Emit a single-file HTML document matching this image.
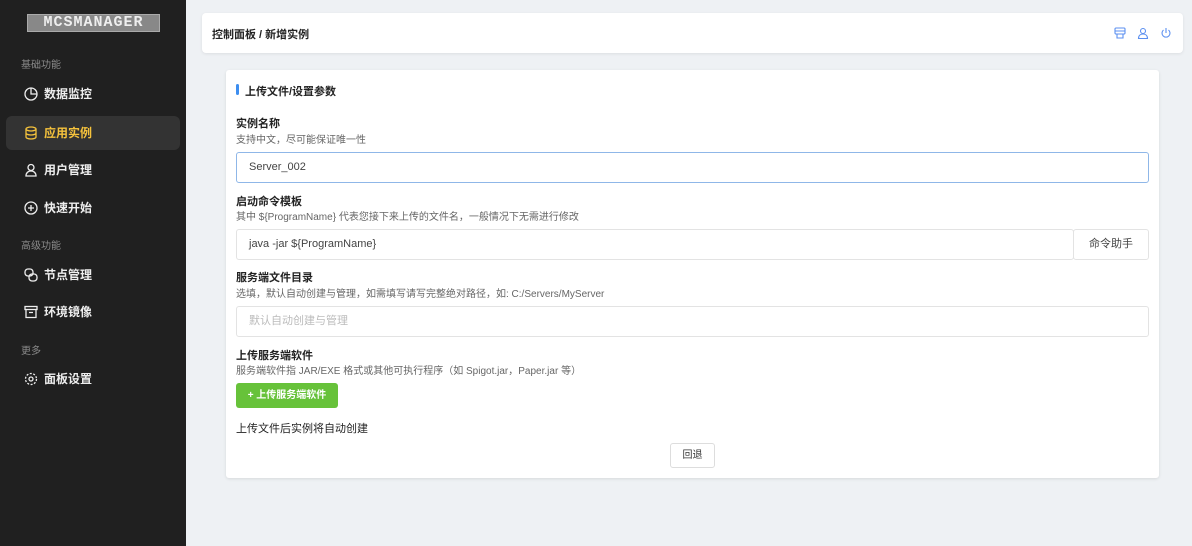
<!DOCTYPE html>
<html><head><meta charset="utf-8"><style>
*{box-sizing:border-box;margin:0;padding:0}
body{width:1192px;height:546px;overflow:hidden;background:#eef1f4;font-family:"Liberation Sans","Noto Sans CJK SC",sans-serif;position:relative}
.side{position:absolute;left:0;top:0;width:186px;height:546px;background:#202020;color:#eee}
.logo{position:absolute;left:27px;top:14px;width:133px;height:18px;background:#888;border:1px solid #aaa;color:#eee;font:bold 15px "Liberation Mono",monospace;letter-spacing:1px;text-align:center;line-height:16px}
.grp{position:absolute;left:21px;font-size:10px;color:#8a8a8a}
.it{position:absolute;left:6px;width:174px;height:34px;font-size:12px;font-weight:bold;line-height:34px;padding-left:38px}
.it svg{position:absolute;left:18px;top:10px}
.act{background:#333;border-radius:6px;color:#f5c23c}
.top{position:absolute;left:202px;top:13px;width:981px;height:40px;background:#fff;border-radius:4px;box-shadow:0 1px 3px rgba(0,0,0,.08)}
.top b{position:absolute;left:10px;top:13px;font-size:11px;color:#222}
.card{position:absolute;left:226px;top:70px;width:933px;height:408px;background:#fff;border-radius:3px;box-shadow:0 1px 3px rgba(0,0,0,.1)}
.t{position:absolute;left:10px;font-size:11px;font-weight:bold;color:#222}
.s{position:absolute;left:10px;font-size:10px;color:#666}
.in{position:absolute;left:10px;height:31px;border:1px solid #e3e3e3;border-radius:3px;font-size:11px;color:#444;padding-left:12px;line-height:29px}
</style></head><body>
<div class="side">
<div class="logo">MCSMANAGER</div>
<div class="grp" style="top:56px">基础功能</div>
<div class="it" style="top:77px"><svg width="14" height="14" viewBox="0 0 14 14" fill="none" stroke="#eee" stroke-width="1.3"><circle cx="7" cy="7" r="6"/><path d="M7 1v6h6"/></svg>数据监控</div>
<div class="it act" style="top:116px"><svg width="14" height="14" viewBox="0 0 14 14" fill="none" stroke="#f5c23c" stroke-width="1.3"><ellipse cx="7" cy="3" rx="5" ry="2"/><path d="M2 3v8c0 1 2 2 5 2s5-1 5-2V3M2 7c0 1 2 2 5 2s5-1 5-2"/></svg>应用实例</div>
<div class="it" style="top:153px"><svg width="14" height="14" viewBox="0 0 14 14" fill="none" stroke="#eee" stroke-width="1.3"><circle cx="7" cy="4.5" r="3"/><path d="M2 13c0-3 2-5 5-5s5 2 5 5z"/></svg>用户管理</div>
<div class="it" style="top:191px"><svg width="14" height="14" viewBox="0 0 14 14" fill="none" stroke="#eee" stroke-width="1.3"><circle cx="7" cy="7" r="6"/><path d="M7 4v6M4 7h6"/></svg>快速开始</div>
<div class="grp" style="top:237px">高级功能</div>
<div class="it" style="top:258px"><svg width="14" height="14" viewBox="0 0 14 14" fill="none" stroke="#eee" stroke-width="1.3"><rect x="1" y="1" width="8" height="7" rx="3"/><rect x="5" y="6" width="8" height="7" rx="3"/></svg>节点管理</div>
<div class="it" style="top:295px"><svg width="14" height="14" viewBox="0 0 14 14" fill="none" stroke="#eee" stroke-width="1.3"><rect x="1" y="1.5" width="12" height="3"/><path d="M2 4.5v8h10v-8M5 7.5h4"/></svg>环境镜像</div>
<div class="grp" style="top:342px">更多</div>
<div class="it" style="top:362px"><svg width="14" height="14" viewBox="0 0 14 14" fill="none" stroke="#eee" stroke-width="1.3"><circle cx="7" cy="7" r="2"/><circle cx="7" cy="7" r="5.5" stroke-dasharray="2 1.5"/></svg>面板设置</div>
</div>
<div class="top"><b>控制面板 / 新增实例</b>
<svg style="position:absolute;left:912px;top:14px" width="12" height="12" viewBox="0 0 12 12" fill="none" stroke="#5b8ff0" stroke-width="1.1"><rect x="1" y="1" width="10" height="6" rx="1"/><path d="M1 4h10M3 7v4h6V7"/></svg>
<svg style="position:absolute;left:935px;top:14px" width="12" height="12" viewBox="0 0 12 12" fill="none" stroke="#5b8ff0" stroke-width="1.1"><circle cx="6" cy="4" r="2.5"/><path d="M1.5 11.5c0-3 2-4.5 4.5-4.5s4.5 1.5 4.5 4.5z"/></svg>
<svg style="position:absolute;left:958px;top:14px" width="12" height="12" viewBox="0 0 12 12" fill="none" stroke="#5b8ff0" stroke-width="1.1"><path d="M6 1v5M3.5 3a4 4 0 1 0 5 0"/></svg>
</div>
<div class="card">
<div style="position:absolute;left:10px;top:14px;width:3px;height:11px;background:#3d8ef0;border-radius:2px"></div>
<div class="t" style="left:19px;top:13px">上传文件/设置参数</div>
<div class="t" style="top:45px">实例名称</div>
<div class="s" style="top:61px">支持中文，尽可能保证唯一性</div>
<div class="in" style="top:82px;width:913px;border-color:#8fb7e8">Server_002</div>
<div class="t" style="top:123px">启动命令模板</div>
<div class="s" style="top:138px">其中 ${ProgramName} 代表您接下来上传的文件名，一般情况下无需进行修改</div>
<div class="in" style="top:159px;width:838px">java -jar ${ProgramName}</div>
<div class="in" style="top:159px;left:847px;width:76px;padding:0;text-align:center">命令助手</div>
<div class="t" style="top:199px">服务端文件目录</div>
<div class="s" style="top:215px">选填，默认自动创建与管理，如需填写请写完整绝对路径，如: C:/Servers/MyServer</div>
<div class="in" style="top:236px;width:913px;color:#bbb">默认自动创建与管理</div>
<div class="t" style="top:277px">上传服务端软件</div>
<div class="s" style="top:292px">服务端软件指 JAR/EXE 格式或其他可执行程序（如 Spigot.jar，Paper.jar 等）</div>
<div style="position:absolute;left:10px;top:313px;width:102px;height:25px;background:#67c23a;border-radius:3px;color:#fff;font-size:10px;font-weight:bold;text-align:center;line-height:25px">+ 上传服务端软件</div>
<div class="t" style="top:350px;font-weight:normal;color:#222">上传文件后实例将自动创建</div>
<div style="position:absolute;left:444px;top:373px;width:45px;height:25px;border:1px solid #ddd;border-radius:3px;font-size:10px;text-align:center;line-height:23px;color:#333">回退</div>
</div>
</body></html>
